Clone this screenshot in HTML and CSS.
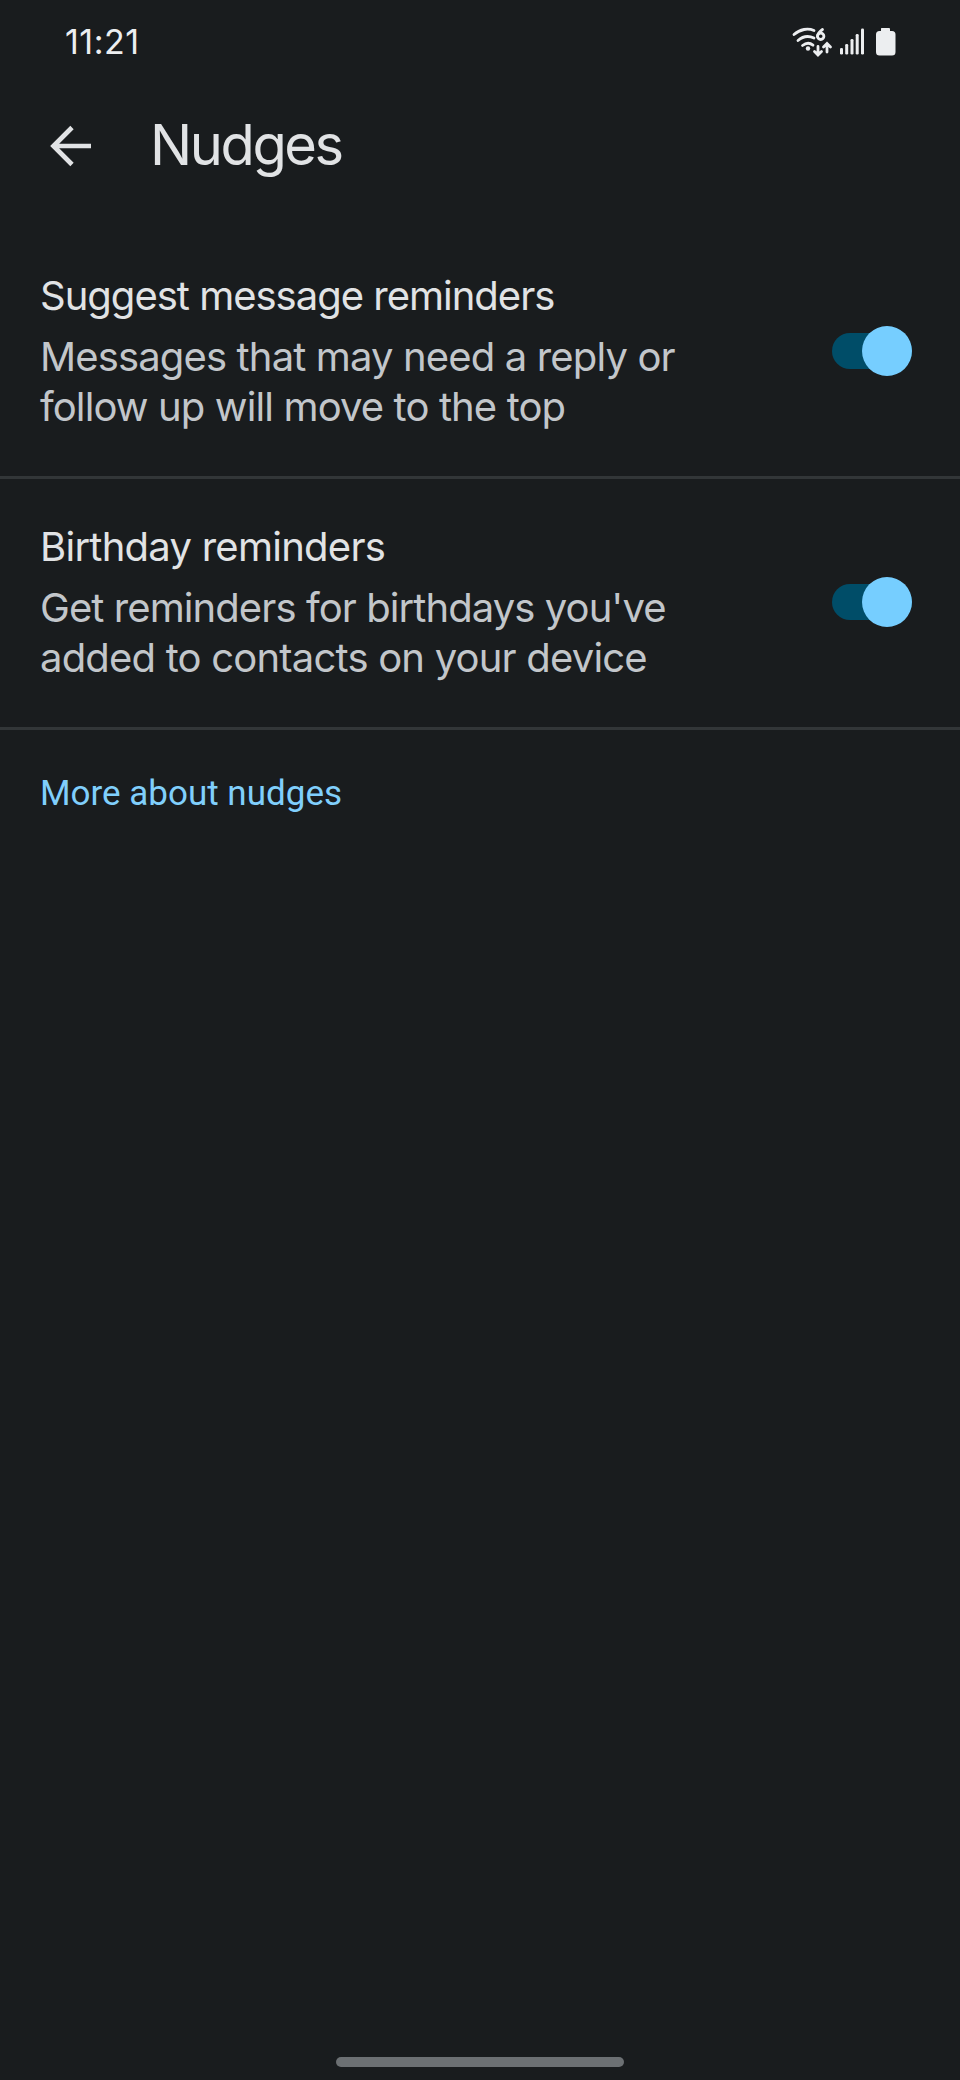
FILE: index.html
```html
<!DOCTYPE html>
<html lang="en">
<head>
<meta charset="utf-8">
<title>Nudges</title>
<link rel="stylesheet" href="styles.css">
</head>
<body>
<div class="screen">
  <div class="status-bar">
    <span class="clock">11:21</span>
    <svg class="status-icons" width="110" height="36" viewBox="790 24 110 36">
      <g fill="none" stroke="#eceef0" stroke-width="2.8" stroke-linecap="round">
        <path d="M794 34.5C800 29 808 28 814 30.5"/>
        <path d="M798 40.5C803 36 808.5 35.5 814 38"/>
        <path d="M802.5 45.5C806 42.8 810 42.8 813 45.2"/>
        <path d="M822.5 29.5C819 32 817.5 34 817.5 36.5"/>
        <circle cx="820.7" cy="36.3" r="3.2"/>
        <path d="M818 46.500V54M814.500 51.500L818 55L821.500 51.500"/>
        <path d="M827 52V44M823.500 47L827 43.500L830.500 47"/>
      </g>
      <circle cx="808" cy="48.500" r="2.200" fill="#eceef0"/>
      <g fill="#eceef0">
        <rect x="840" y="48" width="3" height="6.500" rx="1.300"/>
        <rect x="845.200" y="44" width="3" height="10.500" rx="1.300"/>
        <rect x="850.500" y="39" width="3" height="15.500" rx="1.300"/>
        <rect x="855.700" y="34" width="3" height="20.500" rx="1.300"/>
        <rect x="861" y="28.500" width="3" height="26" rx="1.300"/>
        <path d="M881.500 28H889Q890 28 890 29V31H892Q895.500 31 895.500 34.500V52Q895.500 55.500 892 55.500H879.500Q876 55.500 876 52V34.500Q876 31 879.500 31H881V29Q881 28 881.500 28Z"/>
      </g>
    </svg>
  </div>
  <header class="app-bar">
    <svg class="back" width="44" height="44" viewBox="0 0 44 44" fill="none" stroke="#e1e3e5" stroke-width="4.700">
      <path d="M42 22H5M23 3.500L4.500 22L23 40.500"/>
    </svg>
    <h1 class="title">Nudges</h1>
  </header>
  <main>
    <section class="row">
      <div class="text">
        <h2 class="heading heading-a">Suggest message reminders</h2>
        <p class="detail"><span class="line-a">Messages that may need a reply or</span><br><span class="line-b">follow up will move to the top</span></p>
      </div>
      <div class="switch" role="switch" aria-checked="true"><span class="thumb"></span></div>
    </section>
    <section class="row">
      <div class="text">
        <h2 class="heading heading-b">Birthday reminders</h2>
        <p class="detail"><span class="line-c">Get reminders for birthdays you've</span><br><span class="line-d">added to contacts on your device</span></p>
      </div>
      <div class="switch" role="switch" aria-checked="true"><span class="thumb"></span></div>
    </section>
    <a class="more">More about nudges</a>
  </main>
  <div class="home-bar"></div>
</div>
</body>
</html>
```
FILE: styles.css
```css
* { box-sizing: border-box; margin: 0; padding: 0; }
body { background: #191c1e; }
.screen {
  width: 960px;
  height: 2080px;
  display: flex;
  flex-direction: column;
  background: #191c1e;
  color: #e1e3e5;
  font-family: Inter, Roboto, sans-serif;
}
.status-bar {
  height: 84px;
  padding: 0 60px 0 65px;
  display: flex;
  justify-content: space-between;
  align-items: center;
}
.clock { font-size: 34px; line-height: 40px; letter-spacing: 0.5px; color: #eceef0; }
.app-bar { height: 144px; padding: 40px 0 0 49px; display: flex; gap: 57px; }
.back { display: block; }
.title { font-size: 56px; font-weight: 400; line-height: 68px; margin-top: -13px; letter-spacing: -2.4px; }
.row {
  height: 251px;
  padding-left: 40px;
  padding-right: 48px;
  display: flex;
  justify-content: space-between;
  border-bottom: 3px solid #323638;
}
.text { padding-top: 43px; white-space: nowrap; }
.heading { font-size: 40px; font-weight: 400; line-height: 50px; }
.heading-a { letter-spacing: -1px; }
.heading-b { letter-spacing: -0.74px; }
.detail { font-size: 40px; line-height: 50px; margin-top: 11px; color: #c2c6ca; }
.line-a { letter-spacing: -0.86px; }
.line-b { letter-spacing: -0.88px; }
.line-c { letter-spacing: -0.92px; }
.line-d { letter-spacing: -0.8px; }
.switch {
  width: 80px;
  height: 36px;
  margin-top: 105px;
  border-radius: 18px;
  background: #004d68;
  display: flex;
  align-items: center;
  justify-content: flex-end;
}
.thumb { width: 50px; height: 50px; flex: none; border-radius: 50%; background: #76ceff; }
.more {
  display: block;
  margin: 42px 0 0 40px;
  font-family: Roboto, sans-serif;
  font-size: 35px;
  line-height: 44px;
  color: #80cffc;
}
.home-bar { width: 288px; height: 10px; margin: auto auto 13px; border-radius: 5px; background: #6c7073; }
```
